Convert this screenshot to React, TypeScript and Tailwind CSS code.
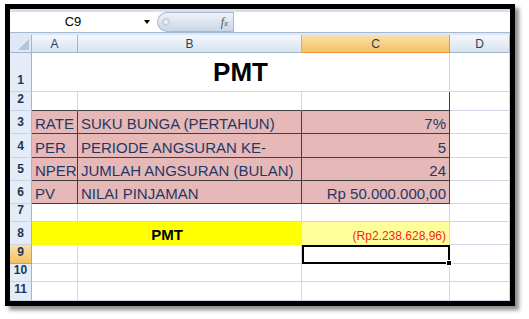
import React from 'react';

const grid = 'border-r border-b border-[#d0d7e5]';
const rowHead =
  'flex items-end justify-center pb-[2px] bg-[#e4ecf7] border-r border-b border-r-[#9eb6ce] border-b-[#c5d3e5] text-[12px] font-bold text-[#1f3553]';
const colHead =
  'flex items-center justify-center bg-linear-to-b from-[#f3f7fc] to-[#d9e3f0] border-r border-b border-[#9eb6ce] text-[12px] text-[#27415f]';
const pink = 'bg-[#e6b8b7] border-r border-b border-[#404040] flex items-end pb-[2px] px-[3px] text-[15px] leading-none text-[#1f3864]';

export default function App() {
  const rows = [
    { n: '3', code: 'RATE', label: 'SUKU BUNGA (PERTAHUN)', value: '7%' },
    { n: '4', code: 'PER', label: 'PERIODE ANGSURAN KE-', value: '5' },
    { n: '5', code: 'NPER', label: 'JUMLAH ANGSURAN (BULAN)', value: '24' },
    { n: '6', code: 'PV', label: 'NILAI PINJAMAN', value: 'Rp 50.000.000,00' },
  ];

  return (
    <div className="w-[529px] h-[319px] bg-white pt-[4px] pl-[5px] font-['Liberation_Sans',Arial,sans-serif]">
      <div className="w-[510px] h-[302px] border-[5px] border-black bg-white flex flex-col shadow-[4px_4px_4px_rgba(0,0,0,0.45)]">
        {/* Formula bar */}
        <div className="h-[26px] bg-[#d5e0ee] pt-[3px] flex flex-col">
          <div className="h-[20px] bg-white flex items-stretch">
            <div className="w-[126px] flex items-center justify-center text-[13px] text-black">C9</div>
            <div className="w-[21px] flex items-center justify-center">
              <div className="w-0 h-0 border-l-[3px] border-r-[3px] border-t-[4px] border-l-transparent border-r-transparent border-t-black" />
            </div>
            <div className="w-[76px] rounded-l-full bg-linear-to-b from-[#eef3f9] to-[#c9d6e8] border border-r-0 border-[#a7b9d1] flex items-center justify-between pl-[4px] pr-[5px]">
              <div className="w-[8px] h-[8px] rounded-full bg-radial from-white to-[#b9c3cf] border border-[#c3cbd6]" />
              <span className="font-['Liberation_Serif',serif] italic text-[12px] text-[#555]">
                f<span className="text-[9px]">x</span>
              </span>
            </div>
            <div className="flex-1 border-l border-[#a7b9d1] bg-white" />
          </div>
          <div className="flex-1 border-t border-[#a5b9d3] bg-[#dfe7f2]" />
        </div>

        {/* Sheet */}
        <div className="grid grid-cols-[22px_46px_224px_148px_60px] grid-rows-[18px_39px_19px_23px_24px_23px_23px_18px_23px_19px_18px_19px]">
          {/* header row */}
          <div className="bg-[#dfe8f4] border-r border-b border-[#9eb6ce] flex items-end justify-end p-[2px]">
            <div className="w-[11px] h-[11px] bg-[#b4c5da] [clip-path:polygon(100%_0,100%_100%,0_100%)]" />
          </div>
          <div className={colHead}>A</div>
          <div className={colHead}>B</div>
          <div className="flex items-center justify-center bg-linear-to-b from-[#fbe1aa] to-[#f3c162] border-r border-b border-[#f29536] text-[12px] text-[#27415f]">C</div>
          <div className={colHead}>D</div>

          {/* row 1 */}
          <div className={rowHead}>1</div>
          <div className={`${grid} col-span-3 flex items-center justify-center text-[26px] font-bold text-black`}>PMT</div>
          <div className={grid} />

          {/* row 2 */}
          <div className={rowHead}>2</div>
          <div className="border-r border-r-[#d0d7e5] border-b border-b-[#404040]" />
          <div className="border-r border-r-[#d0d7e5] border-b border-b-[#404040]" />
          <div className="border-r border-r-[#404040] border-b border-b-[#404040]" />
          <div className={grid} />

          {/* rows 3-6 */}
          {rows.map((r) => (
            <React.Fragment key={r.n}>
              <div className={rowHead}>{r.n}</div>
              <div className={pink}>{r.code}</div>
              <div className={pink}>{r.label}</div>
              <div className={`${pink} justify-end`}>{r.value}</div>
              <div className={grid} />
            </React.Fragment>
          ))}

          {/* row 7 */}
          <div className={rowHead}>7</div>
          <div className={grid} />
          <div className={grid} />
          <div className={grid} />
          <div className={grid} />

          {/* row 8 */}
          <div className={rowHead}>8</div>
          <div className="col-span-2 bg-[#ffff00] flex items-end justify-center pb-[3px] text-[15px] leading-none font-bold text-black">PMT</div>
          <div className="bg-[#ffff99] border-r border-[#d0d7e5] flex items-end justify-end pb-[3px] pr-[3px] text-[12px] leading-none text-[#f2261f]">(Rp2.238.628,96)</div>
          <div className={grid} />

          {/* row 9 */}
          <div className="flex items-end justify-center pb-[2px] bg-linear-to-b from-[#fbe1aa] to-[#f3c162] border-r border-b border-[#f29536] text-[12px] font-bold text-[#1f3553]">9</div>
          <div className={grid} />
          <div className={grid} />
          <div className="relative border-2 border-black">
            <div className="absolute -right-[4px] -bottom-[4px] w-[6px] h-[6px] bg-black border border-white" />
          </div>
          <div className={grid} />

          {/* row 10 */}
          <div className={rowHead}>10</div>
          <div className={grid} />
          <div className={grid} />
          <div className={grid} />
          <div className={grid} />

          {/* row 11 */}
          <div className={rowHead}>11</div>
          <div className={grid} />
          <div className={grid} />
          <div className={grid} />
          <div className={grid} />
        </div>
      </div>
    </div>
  );
}
